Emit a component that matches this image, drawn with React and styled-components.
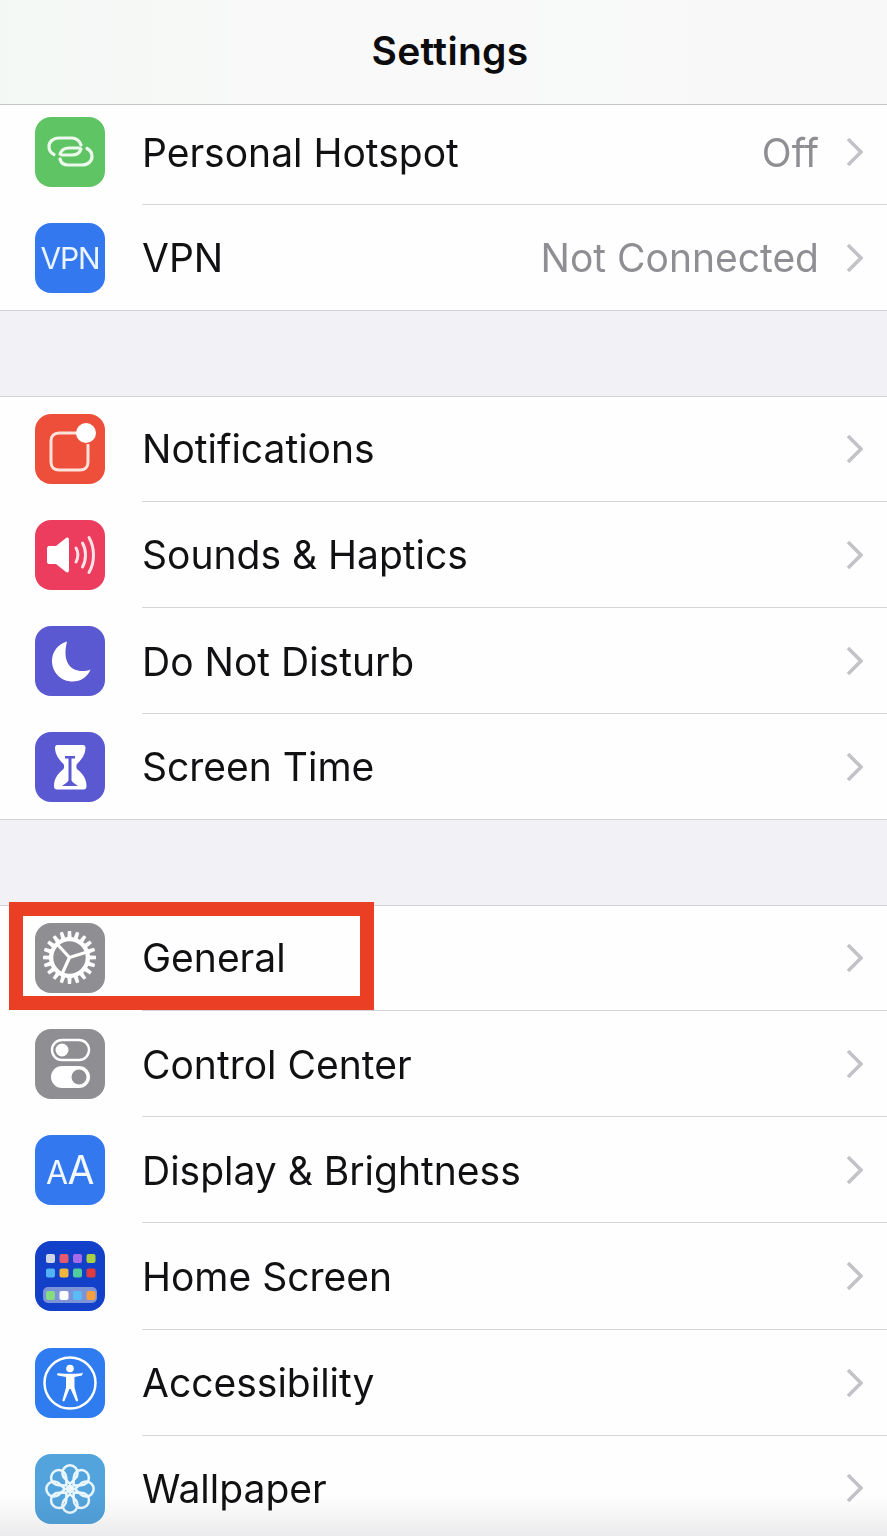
import styled, { createGlobalStyle } from "styled-components";

const GlobalStyle = createGlobalStyle`
  html, body {
    margin: 0;
    padding: 0;
    background: #ffffff;
  }
  body {
    height: 1536px;
    overflow: hidden;
    font-family: Inter, "Liberation Sans", sans-serif;
  }
`;

const Screen = styled.div`
  position: relative;
  width: 887px;
  height: 1536px;
  overflow: hidden;
  background: #f1f1f6;
`;

const Header = styled.header`
  position: relative;
  z-index: 2;
  height: 105px;
  padding: 0 0 3px 13px;
  box-sizing: border-box;
  display: flex;
  align-items: center;
  justify-content: center;
  background: linear-gradient(90deg, #f4f8f5 0%, #f8f9f8 30%, #f8f8f9 100%);
  border-bottom: 1px solid #c6c6c9;
  font-size: 39px;
  font-weight: 600;
  letter-spacing: 0.3px;
  color: #0c0c0e;
`;

const Section = styled.section`
  background: #fefefe;
  border-top: 1px solid #d2d2d6;
  border-bottom: 1px solid #d2d2d6;
  margin-bottom: 84.5px;

  &:first-of-type {
    margin-top: -6px;
  }
`;

const Row = styled.div`
  display: flex;
  align-items: stretch;
  height: 106.2px;
  padding-left: 35px;
  box-sizing: border-box;

  &:last-child {
    height: 104px;
  }
`;

const IconBox = styled.div`
  flex: none;
  width: 70px;
  height: 70px;
  align-self: flex-start;
  margin-top: 17px;
  margin-right: 37px;
  border-radius: 16px;
  background: ${(props) => props.$color};
  overflow: hidden;

  svg {
    display: block;
  }
`;

const RowBody = styled.div`
  flex: 1;
  display: flex;
  align-items: center;
  padding-right: 24px;
  margin-bottom: 1px;
  border-bottom: 1px solid #d6d6d9;

  ${Row}:last-child & {
    border-bottom: none;
  }
`;

const Label = styled.span`
  flex: 1;
  font-size: 39px;
  color: #111113;
`;

const Value = styled.span`
  font-size: 39px;
  color: #8e8e93;
  margin-right: 27px;
`;

const Chevron = styled.svg`
  flex: none;
  width: 17px;
  height: 30px;
  fill: none;
  stroke: #c3c3c7;
  stroke-width: 3.6;
`;

const Callout = styled.div`
  position: absolute;
  left: 9px;
  top: 902px;
  width: 365px;
  height: 108px;
  box-sizing: border-box;
  border: 14px solid #ea3f24;
  z-index: 3;
`;

const BottomFade = styled.div`
  position: absolute;
  left: 0;
  right: 0;
  bottom: 0;
  height: 40px;
  z-index: 1;
  mix-blend-mode: multiply;
  background: linear-gradient(180deg, #ffffff, #ececee);
`;

const Glyph = ({ children }) => (
  <svg width="70" height="70" viewBox="0 0 70 70" fill="none" stroke="#fff">
    {children}
  </svg>
);

const gearPath = () => {
  const teeth = 20;
  let d = "";
  for (let i = 0; i < teeth; i++) {
    const step = (Math.PI * 2) / teeth;
    const a = i * step;
    const pts = [
      [20.5, a - step * 0.5],
      [20.5, a - step * 0.32],
      [26.5, a - step * 0.2],
      [26.5, a + step * 0.2],
      [20.5, a + step * 0.32],
    ];
    pts.forEach(([r, t], j) => {
      const x = (34.5 + r * Math.cos(t)).toFixed(2);
      const y = (34.5 + r * Math.sin(t)).toFixed(2);
      d += `${i === 0 && j === 0 ? "M" : "L"}${x} ${y}`;
    });
  }
  return d + "Z";
};

const HotspotIcon = () => (
  <Glyph>
    <g strokeWidth="3.2" strokeLinecap="round" stroke="#ecf9ec">
      <path d="M46 28C45 24 41 21 37 21H24C18 21 14 25 14 29.500C14 33 16 36 19 37.500" />
      <path d="M27 38H37C42 38 45 35 46 32" />
      <path d="M25 42C26 46 29 48 33 48H47C53 48 57 44 57 39.500C57 36 55 33 52 31.500" />
      <path d="M44 31H34C29 31 26 34 25 37" />
    </g>
  </Glyph>
);

const VpnIcon = () => (
  <svg width="70" height="70" viewBox="0 0 70 70">
    <text x="35" y="46" textAnchor="middle" fontFamily="Inter, sans-serif" fontSize="30" letterSpacing="-1.2" fill="#eaf5ff">
      VPN
    </text>
  </svg>
);

const NotificationsIcon = () => (
  <Glyph>
    <path
      d="M42 19H24c-5 0-8 3-8 8v21c0 5 3 8 8 8h21c5 0 8-3 8-8V30"
      strokeWidth="3"
      stroke="#fde3dc"
    />
    <circle cx="51" cy="19" r="10" fill="#fff" stroke="none" />
  </Glyph>
);

const SoundsIcon = () => (
  <Glyph>
    <path
      d="M12 28c0-1 1-2 2-2h7l10-8c2-1 3 0 3 2v30c0 2-1 3-3 2l-10-8h-7c-1 0-2-1-2-2Z"
      fill="#fff"
      stroke="none"
    />
    <g strokeWidth="3" strokeLinecap="round" stroke="#fde3e8">
      <path d="M41 28c2.500 4 2.500 10 0 14" />
      <path d="M47.500 23c4 7 4 17 0 24" />
      <path d="M54 17.500c6 10.500 6 24.500 0 35" />
    </g>
  </Glyph>
);

const MoonIcon = () => (
  <svg width="70" height="70" viewBox="0 0 70 70">
    <path
      d="M32 15.500C22.500 18.500 17 26 17 35c0 12 9.500 20.500 20.500 20.500 8.500 0 15-4.500 18-12-2.500 1-5 1.500-8 1.500C35 45 27 35.500 32 15.500Z"
      fill="#fff"
    />
  </svg>
);

const HourglassIcon = () => (
  <svg width="70" height="70" viewBox="0 0 70 70">
    <path
      d="M22 13h26c1.500 0 2.500 1 2.500 2.500 0 7-4 12-8 16-1.500 1-1.500 5 0 6 5 4 9 9 9 16.500 0 2.500-1 3.500-3 3.500H22c-2 0-3-1-3-3.500 0-7.500 4-12.500 9-16.500 1.500-1 1.500-5 0-6-4-4-8-9-8-16 0-1.500 1-2.500 2-2.500Z"
      fill="#fff"
    />
    <path
      d="M30 24h10v2.500h-3.500V48c0 2 4 4 6.500 6H27c2.500-2 6.500-4 6.500-6V26.500H30Z"
      fill="#5a59d1"
    />
  </svg>
);

const GearIcon = () => (
  <Glyph>
    <path d={gearPath()} fill="#fff" stroke="none" />
    <circle cx="34.500" cy="34.500" r="18" fill="#8e8e93" stroke="#fff" strokeWidth="3.600" />
    <path d="M34.500 34.500 23 22M34.500 34.500 52 29M34.500 34.500 27 51" strokeWidth="3.200" />
  </Glyph>
);

const ControlIcon = () => (
  <svg width="70" height="70" viewBox="0 0 70 70">
    <rect x="17" y="11" width="37" height="20" rx="10" fill="none" stroke="#fff" strokeWidth="2.400" />
    <circle cx="27" cy="21" r="6.500" fill="#fff" />
    <rect x="16" y="37" width="39" height="22" rx="11" fill="#fff" />
    <circle cx="44" cy="48" r="7.500" fill="#8e8e93" />
  </svg>
);

const TextSizeIcon = () => (
  <svg width="70" height="70" viewBox="0 0 70 70">
    <text x="22" y="49" textAnchor="middle" fontFamily="Inter, sans-serif" fontSize="32" fill="#f2f8ff">
      A
    </text>
    <text x="46" y="49" textAnchor="middle" fontFamily="Inter, sans-serif" fontSize="39" fill="#f2f8ff">
      A
    </text>
  </svg>
);

const homeDots = [
  ["#d0d5e4", "#e55a6d", "#a76ae8", "#a9cf45"],
  ["#52b4f5", "#f4b63a", "#4fcb9c", "#e13a3f"],
];
const dockDots = ["#86dc83", "#ffffff", "#59bcf7", "#f5a040"];

const HomeIcon = () => (
  <svg width="70" height="70" viewBox="0 0 70 70">
    {homeDots.map((line, y) =>
      line.map((c, x) => <rect key={`${x}-${y}`} x={11 + x * 13.500} y={13 + y * 14.500} width="9" height="9" rx="2" fill={c} />)
    )}
    <rect x="8" y="46" width="54" height="16" rx="5" fill="#7d93d8" />
    {dockDots.map((c, x) => (
      <rect key={c} x={11 + x * 13.500} y="50" width="9" height="9" rx="2" fill={c} />
    ))}
  </svg>
);

const AccessibilityIcon = () => (
  <Glyph>
    <circle cx="35" cy="35" r="25.500" strokeWidth="2.500" />
    <circle cx="35" cy="20.500" r="3.800" fill="#fff" stroke="none" />
    <path
      d="M23 27.500c-1.500-.4-1.200-2.500.5-2.300 7.500 .8 15.500 .8 23 0 1.700-.2 2-2.300.5 2.300l-7.500 1.500v10.500l3.500 12.500c.3 1.400-1.600 1.900-2.100.7L35.600 41h-1.200l-4.800 11.700c-.5 1.200-2.400.7-2.100-.7l3.500-12.500V29Z"
      fill="#fff"
      stroke="none"
    />
  </Glyph>
);

const WallpaperIcon = () => (
  <Glyph>
    <g strokeWidth="2.500" stroke="#eaf7ff" strokeLinejoin="round">
      {[0, 45, 90, 135, 180, 225, 270, 315].map((deg) => (
        <path
          key={deg}
          transform={`rotate(${deg} 35 35)`}
          d="M35 30 L29.800 24.500 A7.600 7.600 0 1 1 40.200 24.500 Z"
        />
      ))}
    </g>
    <circle cx="35" cy="35" r="4.200" fill="#eaf7ff" stroke="none" />
  </Glyph>
);

const sections = [
  [
    { label: "Personal Hotspot", value: "Off", color: "#5fc463", Icon: HotspotIcon },
    { label: "VPN", value: "Not Connected", color: "#3478f0", Icon: VpnIcon },
  ],
  [
    { label: "Notifications", color: "#ee4f3a", Icon: NotificationsIcon },
    { label: "Sounds & Haptics", color: "#ec3d5f", Icon: SoundsIcon },
    { label: "Do Not Disturb", color: "#5a59d1", Icon: MoonIcon },
    { label: "Screen Time", color: "#5a59d1", Icon: HourglassIcon },
  ],
  [
    { label: "General", color: "#8e8e93", Icon: GearIcon },
    { label: "Control Center", color: "#8e8e93", Icon: ControlIcon },
    { label: "Display & Brightness", color: "#3478f0", Icon: TextSizeIcon },
    { label: "Home Screen", color: "#1340c8", Icon: HomeIcon },
    { label: "Accessibility", color: "#2f7bf0", Icon: AccessibilityIcon },
    { label: "Wallpaper", color: "#53a3dc", Icon: WallpaperIcon },
  ],
];

const App = () => {
  return (
    <Screen>
      <GlobalStyle />
      <Header>Settings</Header>
      {sections.map((rows, i) => (
        <Section key={i}>
          {rows.map(({ label, value, color, Icon }) => (
            <Row key={label}>
              <IconBox $color={color}>
                <Icon />
              </IconBox>
              <RowBody>
                <Label>{label}</Label>
                {value && <Value>{value}</Value>}
                <Chevron viewBox="0 0 17 30">
                  <path d="M2 2l13 13L2 28" />
                </Chevron>
              </RowBody>
            </Row>
          ))}
        </Section>
      ))}
      <Callout />
      <BottomFade />
    </Screen>
  );
};

export default App;
